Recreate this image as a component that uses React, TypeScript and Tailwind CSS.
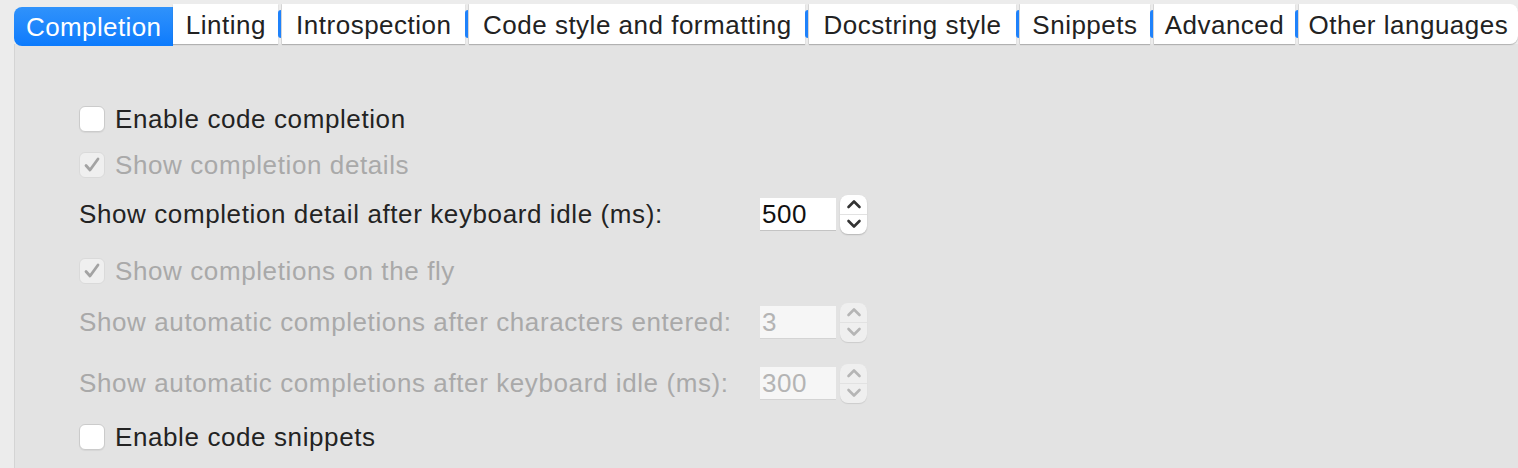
import React from 'react';

const FONT = { fontFamily: '"Liberation Sans", Arial, sans-serif' };

const TABS: { label: string; w: string }[] = [
  { label: 'Completion', w: 'w-[160px]' },
  { label: 'Linting', w: 'w-[105px]' },
  { label: 'Introspection', w: 'w-[184px]' },
  { label: 'Code style and formatting', w: 'w-[337px]' },
  { label: 'Docstring style', w: 'w-[207px]' },
  { label: 'Snippets', w: 'w-[131px]' },
  { label: 'Advanced', w: 'w-[141px]' },
  { label: 'Other languages', w: 'w-[220px]' },
];

function Separator() {
  return (
    <div className="flex h-full items-center">
      <div className="h-[28px] w-[3px] rounded-l-full bg-[#1f82fb]" />
      <div className="h-full w-px bg-[#dcdcdc]" />
    </div>
  );
}

function Checkbox({ checked, disabled }: { checked?: boolean; disabled?: boolean }) {
  return (
    <div
      className={
        disabled
          ? 'flex h-[26px] w-[26px] items-center justify-center rounded-[6px] border border-[#dadada] bg-[#efefef]'
          : 'flex h-[26px] w-[26px] items-center justify-center rounded-[6px] border border-[#cbcbcb] bg-white shadow-[0_1px_1px_rgba(0,0,0,0.06)]'
      }
    >
      {checked && (
        <svg width="18" height="18" viewBox="0 0 18 18">
          <path d="M3 9.5 L7 14 L15 3" fill="none" stroke="#a3a3a3" strokeWidth="2.8" strokeLinecap="round" strokeLinejoin="round" />
        </svg>
      )}
    </div>
  );
}

function Stepper({ value, disabled }: { value: string; disabled?: boolean }) {
  const stroke = disabled ? '#b5b5b5' : '#333333';
  return (
    <div className="flex items-center gap-[4px]">
      <div
        className={
          disabled
            ? 'flex h-[32px] w-[76px] items-center bg-[#f6f6f6] pl-[2px] text-[26px] text-[#b4b4b4] shadow-[0_1px_0_#d4d4d4]'
            : 'flex h-[32px] w-[76px] items-center bg-white pl-[2px] text-[26px] text-[#111] shadow-[0_1px_0_#c4c4c4]'
        }
      >
        {value}
      </div>
      <div
        className={
          disabled
            ? 'flex h-[39px] w-[27px] flex-col rounded-[8px] bg-[#efefef] shadow-[0_1px_1px_rgba(0,0,0,0.1)]'
            : 'flex h-[39px] w-[27px] flex-col rounded-[8px] bg-white shadow-[0_1px_1.5px_rgba(0,0,0,0.2)]'
        }
      >
        <div className="flex flex-1 items-center justify-center border-b border-[#e2e2e2]">
          <svg width="16" height="10" viewBox="0 0 16 10">
            <path d="M2.5 8 L8 2.5 L13.5 8" fill="none" stroke={stroke} strokeWidth="2.6" strokeLinecap="round" strokeLinejoin="round" />
          </svg>
        </div>
        <div className="flex flex-1 items-center justify-center">
          <svg width="16" height="10" viewBox="0 0 16 10">
            <path d="M2.5 2 L8 7.5 L13.5 2" fill="none" stroke={stroke} strokeWidth="2.6" strokeLinecap="round" strokeLinejoin="round" />
          </svg>
        </div>
      </div>
    </div>
  );
}

export default function App() {
  return (
    <div className="flex h-[468px] w-[1518px] flex-col overflow-hidden bg-[#ececec] pl-[14px] pt-[4px] tracking-[0.6px]" style={FONT}>
      {/* tab bar */}
      <div className="relative z-10 flex h-[40px] items-start">
        {TABS.map((t, i) => {
          if (i === 0) {
            return (
              <div
                key={t.label}
                className={`mt-[3px] flex h-[39px] ${t.w} items-center justify-center rounded-l-[8px] bg-gradient-to-b from-[#2f92fb] to-[#0b7bfd] pt-[2px] text-[26px] tracking-[0.4px] text-white`}
              >
                {t.label}
              </div>
            );
          }
          const last = i === TABS.length - 1;
          return (
            <React.Fragment key={t.label}>
              {i > 1 && <Separator />}
              <div
                className={`flex h-[40px] ${t.w} items-center justify-center bg-white pt-[2px] text-[26px] tracking-[0.5px] text-[#222] shadow-[0_1px_1px_rgba(0,0,0,0.22)] ${last ? 'rounded-r-[8px]' : ''}`}
              >
                {t.label}
              </div>
            </React.Fragment>
          );
        })}
      </div>

      {/* pane */}
      <div className="flex-1 border-l border-[#d4d4d4] bg-[#e3e3e3] pl-[64px] pt-[52px] text-[26px] text-[#232323]">
        <div className="flex h-[46px] items-center gap-[10px]">
          <Checkbox />
          <span>Enable code completion</span>
        </div>
        <div className="flex h-[46px] items-center gap-[10px] text-[#a9a9a9]">
          <Checkbox checked disabled />
          <span>Show completion details</span>
        </div>
        <div className="flex h-[52px] items-center">
          <span className="w-[681px]">Show completion detail after keyboard idle (ms):</span>
          <Stepper value="500" />
        </div>
        <div className="flex h-[62px] items-center gap-[10px] text-[#a9a9a9]">
          <Checkbox checked disabled />
          <span>Show completions on the fly</span>
        </div>
        <div className="flex h-[40px] items-center text-[#a9a9a9]">
          <span className="w-[681px]">Show automatic completions after characters entered:</span>
          <Stepper value="3" disabled />
        </div>
        <div className="mt-[18px] flex h-[46px] items-center text-[#a9a9a9]">
          <span className="w-[681px]">Show automatic completions after keyboard idle (ms):</span>
          <Stepper value="300" disabled />
        </div>
        <div className="flex h-[62px] items-center gap-[10px]">
          <Checkbox />
          <span>Enable code snippets</span>
        </div>
      </div>
    </div>
  );
}
